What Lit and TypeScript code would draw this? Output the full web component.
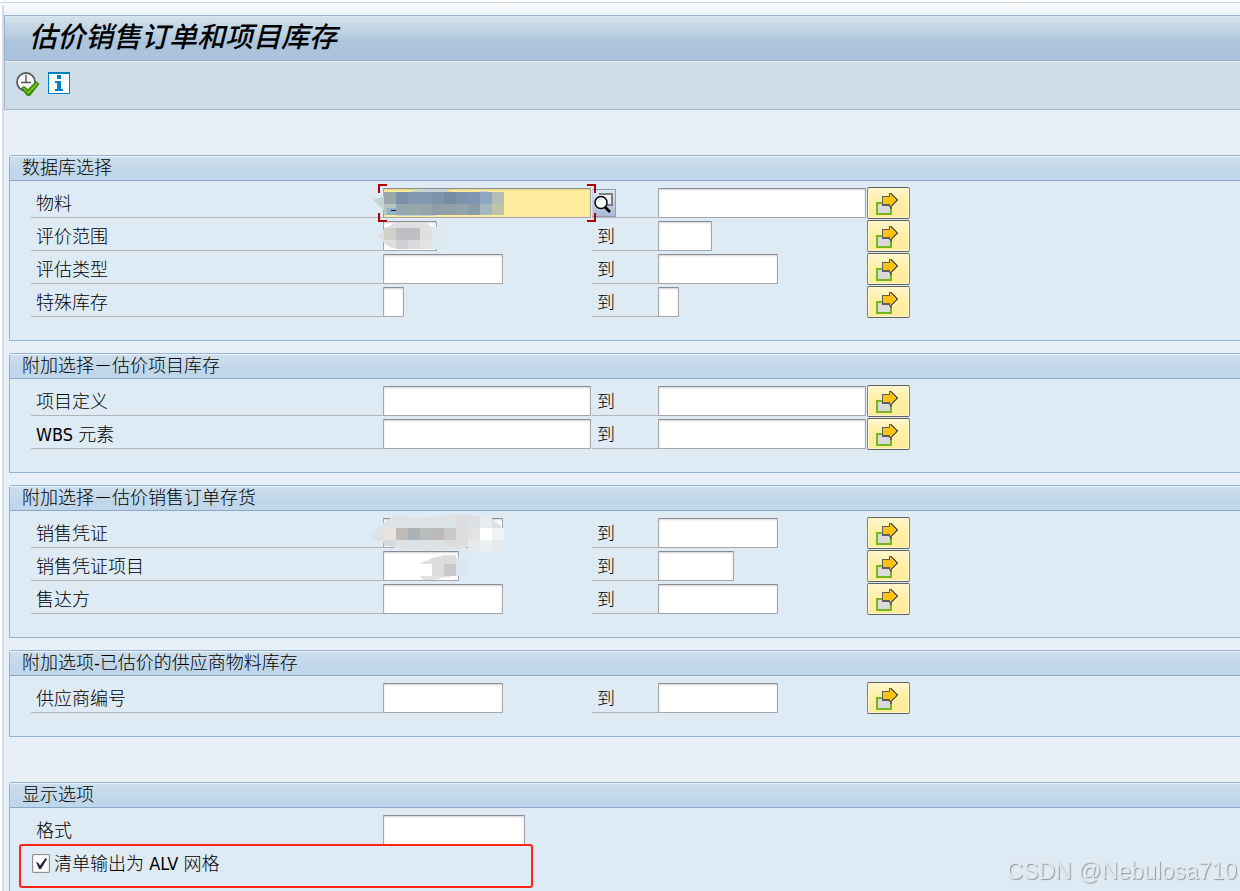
import { LitElement, html, css, svg, nothing } from "lit";
import { customElement, property } from "lit/decorators.js";

type Size = "long" | "plant" | "mid" | "one" | "short" | "format";
type Block = [number, number, number, number, string];

interface Redaction {
  shape: string;
  tint: string;
  blocks: Block[];
}

interface Row {
  id: string;
  label: string;
  size: Size;
  active?: boolean;
  redaction?: Redaction;
}

interface Group {
  title: string;
  rows: Row[];
}

/** Lays colours side by side as 12px mosaic blocks. */
const strip = (x: number, y: number, h: number, colors: string): Block[] =>
  colors.split(" ").map((c, i) => [x + i * 12, y, 12, h, "#" + c] as Block);

const materialMask: Redaction = {
  shape: "M-10 12 L1 8 V22 L-2 20 Z M26 4 Q34 1 48 1 H62 L68 4 Z M96 4 V3 H104 V4 Z M14 28 V26 H52 V28 Z",
  tint: "#c6d3d3",
  blocks: [
    ...strip(1, 4, 12, "9ba8aa 7b8fa9 8398b3 8398b3 7f93ab 778ba5 7f93ac 7f95b2 8ea6c1 b3bfb3"),
    ...strip(1, 16, 11, "b9c6c4 93a6b2 95a8ac 93a5aa 8d9ea6 909fa6 93a4a9 8b9ca9 a5b8c1 bfc4a9"),
    [4, 20, 9, 7, "#8fb4d0"],
    [8, 22, 5, 1, "#111111"],
  ],
};

const plantMask: Redaction = {
  shape: "M-6 15 L1 8 Q10 1 24 1 H40 Q46 3 48 6 H66 L60 8 V28 H14 Q4 26 1 22 Z",
  tint: "#dfdfe2",
  blocks: [
    ...strip(1, 7, 12, "d2d2cb c0bec2 c0bec2 dfe0e0 dee8f0"),
    ...strip(13, 19, 9, "d1d0d3 d9dcdf e2e3e3 dce8ef"),
    [52, 6, 9, 20, "#dee9f1"],
  ],
};

const documentMask: Redaction = {
  shape: "M-11 14 L1 5 L8 0 Q16 -6 27 0 L54 -1 Q70 -6 96 -2 L108 0 L118 8 L121 22 V34 H98 L86 29 Q60 34 28 32 L8 29 L-10 20 Z",
  tint: "#dce2e5",
  blocks: [
    ...strip(73, -2, 12, "dddcdf dde0e2 e6edf1"),
    ...strip(1, 10, 12, "e6e5e0 bfb9b7 a9b2b7 babdbc b9bab9 cac9c8 dddcde e3e3e3 ffffff f0f2f4"),
    ...strip(1, 22, 6, "d5dadd dee2e4 dce1e3 dce1e3 dce1e3 d8dcdf dcdddf"),
    ...strip(85, 22, 12, "e4e9ec ebf1f3 e4eaed"),
  ],
};

const itemMask: Redaction = {
  shape: "M36 13 L49 7 L61 4 H73 V25 L61 26 L52 29 H40 L36 25 L49 25 V13 Z",
  tint: "#dfe3e5",
  blocks: [
    [49, 7, 12, 18, "#dcdcda"],
    [61, 5, 12, 8, "#dcdcda"],
    [61, 13, 12, 12, "#c7c8cb"],
    [73, 7, 11, 18, "#dbe6ee"],
  ],
};

const groups: Group[] = [
  {
    title: "数据库选择",
    rows: [
      { id: "material", label: "物料", size: "long", active: true, redaction: materialMask },
      { id: "area", label: "评价范围", size: "plant", redaction: plantMask },
      { id: "type", label: "评估类型", size: "mid" },
      { id: "special", label: "特殊库存", size: "one" },
    ],
  },
  {
    title: "附加选择－估价项目库存",
    rows: [
      { id: "project", label: "项目定义", size: "long" },
      { id: "wbs", label: "WBS 元素", size: "long" },
    ],
  },
  {
    title: "附加选择－估价销售订单存货",
    rows: [
      { id: "document", label: "销售凭证", size: "mid", redaction: documentMask },
      { id: "item", label: "销售凭证项目", size: "short", redaction: itemMask },
      { id: "soldto", label: "售达方", size: "mid" },
    ],
  },
  {
    title: "附加选项-已估价的供应商物料库存",
    rows: [{ id: "vendor", label: "供应商编号", size: "mid" }],
  },
];

const controls = css`
  :host {
    display: block;
  }
  *,
  *::before {
    box-sizing: border-box;
  }
  .row {
    display: grid;
    grid-template-columns: 352px 209px 66px 209px 43px;
    height: 33px;
    align-items: start;
  }
  .label {
    height: 31px;
    line-height: 34px;
    padding-left: 5px;
    border-bottom: 1px solid #b3b5b8;
    white-space: nowrap;
  }
  .cell {
    position: relative;
    padding-top: 1px;
  }
  .field {
    display: block;
    height: 30px;
    margin: 0;
    padding: 0 4px;
    border: 1px solid #a6a7ac;
    border-top-color: #8c8d92;
    border-radius: 1px;
    background: #ffffff;
    box-shadow: inset 0 1px 2px #d3d3d8;
    font: inherit;
    outline: none;
  }
  .long { width: 208px; }
  .plant { width: 54px; }
  .mid { width: 120px; }
  .one { width: 21px; }
  .short { width: 76px; }
  .format { width: 142px; }
`;

@customElement("selection-row")
export class SelectionRow extends LitElement {
  @property({ attribute: false }) row!: Row;

  static styles = [
    controls,
    css`
      .active {
        background: #ffee9e;
        box-shadow: inset 0 1px 2px #e2cf86;
      }
      .mask {
        position: absolute;
        left: 0;
        top: 1px;
        width: 1px;
        height: 1px;
        overflow: visible;
        pointer-events: none;
      }
      .brackets {
        position: absolute;
        left: -5px;
        top: -3px;
        z-index: 1;
        pointer-events: none;
      }
      .to {
        height: 31px;
        line-height: 34px;
        padding-left: 5px;
        border-bottom: 1px solid #b3b5b8;
      }
      .to-search {
        padding: 2px 0 0;
      }
      .search {
        display: block;
        width: 24px;
        height: 28px;
        padding: 0;
        border: 1px solid #8f9bb0;
        border-left-color: #c3cede;
        background: linear-gradient(#dfe7f1, #a9b9d6);
      }
      .more {
        display: block;
        width: 43px;
        height: 32px;
        padding: 0;
        border: 1px solid #5f6064;
        border-left-color: #96834d;
        border-right-color: #96834d;
        border-radius: 2px;
        background: linear-gradient(#fff7cf, #ffefa4 45%, #fdeb9b);
        box-shadow: inset 0 0 0 1px #fff6c9;
      }
      .icon {
        display: block;
      }
    `,
  ];

  private mask(r: Redaction) {
    return html`<svg class="mask" aria-hidden="true" shape-rendering="crispEdges">
      <path d=${r.shape} fill=${r.tint}></path>
      ${r.blocks.map(([x, y, w, h, c]) => svg`<rect x=${x} y=${y} width=${w} height=${h} fill=${c}></rect>`)}
    </svg>`;
  }

  render() {
    const { id, label, size, active, redaction } = this.row;
    return html`<div class="row">
      <label class="label" for=${id}>${label}</label>
      <div class="cell">
        <input class="field ${size} ${active ? "active" : ""}" id=${id} type="text" />
        ${redaction ? this.mask(redaction) : nothing}
        ${active
          ? html`<svg class="brackets" width="218" height="38" fill="none" stroke="#ae0000" stroke-width="2" aria-hidden="true">
              <path d="M1 9V1H9M209 1H217V9M217 29V37H209M9 37H1V29"></path>
            </svg>`
          : nothing}
      </div>
      ${active
        ? html`<div class="to to-search">
            <button class="search" type="button" aria-label="搜索">
              <svg class="icon" width="22" height="26" viewBox="1 0 22 26" aria-hidden="true">
                <path d="M7 4H20V15H15" fill="#eef2f7" stroke="#7f7f82" stroke-width="2"></path>
                <circle cx="9" cy="12.500" r="6" fill="#ffffff" stroke="#000000" stroke-width="1.500"></circle>
                <path d="M5.500 12Q6.500 9 9.500 9" stroke="#c8d4e4" fill="none"></path>
                <path d="M13 17L18 22" stroke="#000000" stroke-width="2.800"></path>
              </svg>
            </button>
          </div>`
        : html`<label class="to" for="${id}-to">到</label>`}
      <div class="cell">
        <input class="field ${size}" id="${id}-to" type="text" aria-label="${label} 到" />
      </div>
      <button class="more" type="button" aria-label="多项选择 ${label}">
        <svg class="icon" width="41" height="30" viewBox="1 1 41 30" shape-rendering="crispEdges" aria-hidden="true">
          <path d="M10 16H24V27H10Z" fill="#dadada" stroke="#76b51b" stroke-width="2"></path>
          <path d="M15 9H22V6H25V7H26V8H27V9H28V10H29V11H30V12H31V14H30V15H29V16H28V17H27V18H26V19H25V22H23V20H22V19H15Z" fill="#5e5e60"></path>
          <path d="M16 10H23V7H24V8H25V9H26V10H27V11H28V12H29V14H28V15H27V16H26V17H25V18H24V19H23V17H16Z" fill="#ffc20e"></path>
        </svg>
      </button>
    </div>`;
  }
}

@customElement("app-root")
export class AppRoot extends LitElement {
  static styles = [
    controls,
    css`
      :host {
        height: 100vh;
        overflow: hidden;
        background: #ffffff;
        color: #000000;
        font: 18px/24px "DejaVu Sans Condensed", "Noto Sans CJK SC", sans-serif;
        font-weight: 300;
      }
      .window {
        margin-top: 2px;
        padding: 2px 0 0 2px;
        border-top: 1px solid #cbd5e3;
      }
      .frame {
        padding-top: 10px;
        border-left: 2px solid #d5dce8;
        background: linear-gradient(#f8fafc, #e8eff7 12px);
      }
      .title-bar {
        height: 46px;
        padding-left: 24px;
        border: 1px solid #9cb2ca;
        border-right: 0;
        background: linear-gradient(#d3e2ee, #b9cede 45%, #abc3db 60%, #acc3dc);
        box-shadow: inset 0 1px #dce8f1;
      }
      .title {
        margin: 0;
        font-size: 28px;
        line-height: 44px;
        font-style: italic;
        font-weight: 500;
        white-space: nowrap;
      }
      .toolbar {
        display: flex;
        gap: 8px;
        height: 49px;
        padding: 11px 0 0 11px;
        border: 1px solid #a3b8cd;
        border-width: 0 0 1px 1px;
        background: #cfdde7;
        box-shadow: inset 0 1px #e5eef4;
      }
      .tool {
        height: 24px;
        padding: 0;
        border: 0;
        background: none;
      }
      .icon {
        display: block;
      }
      .content {
        display: flex;
        flex-direction: column;
        gap: 12px;
        padding: 45px 0 0 5px;
      }
      .group {
        border: 1px solid #93b2d1;
        border-right: 0;
        border-radius: 3px 0 0 0;
        background: #deeaf4;
      }
      .group-title {
        height: 25px;
        margin: 0;
        padding-left: 12px;
        border-bottom: 1px solid #8aa6c8;
        background: linear-gradient(#cedfec, #c0d6ea 65%);
        box-shadow: inset 0 1px #e9f3f9;
        font-size: 18px;
        line-height: 24px;
        font-weight: 300;
        white-space: nowrap;
      }
      .rows {
        padding: 6px 0 21px 21px;
      }
      .options {
        margin-top: 33px;
      }
      .check-row {
        position: relative;
        display: flex;
        align-items: center;
        gap: 4px;
        height: 33px;
        padding-left: 1px;
      }
      .check-row::before {
        content: "";
        position: absolute;
        left: -12px;
        top: -3px;
        width: 514px;
        height: 44px;
        border: 2px solid #ff2416;
        border-radius: 3px;
        pointer-events: none;
      }
      .check {
        appearance: none;
        width: 18px;
        height: 19px;
        margin: 0;
        border: 1px solid #8f9096;
        border-radius: 1px;
        background: #ffffff;
        box-shadow: inset 0 0 2px #bbbbc2;
      }
      .check:checked {
        background: #ffffff
          url("data:image/svg+xml,%3Csvg xmlns='http://www.w3.org/2000/svg' viewBox='0 0 16 17'%3E%3Cpath d='M3 7L5.500 8L7 10.500L12.500 3L14 4L8 14H6Z' fill='%23252540'/%3E%3C/svg%3E")
          center / 16px 17px no-repeat;
      }
      .watermark {
        position: fixed;
        right: 3px;
        bottom: 7px;
        color: #e3e9ee;
        font: 23px/26px "Liberation Sans", sans-serif;
        text-shadow: 1px 1px 1px #8f989f;
        pointer-events: none;
      }
    `,
  ];

  render() {
    return html`<div class="window">
        <main class="frame">
          <header class="title-bar"><h1 class="title">估价销售订单和项目库存</h1></header>
          <div class="toolbar" role="toolbar">
            <button class="tool" type="button" aria-label="执行">
              <svg class="icon" width="24" height="24" viewBox="0 0 24 24" aria-hidden="true">
                <circle cx="10" cy="10" r="9" fill="#fafafa" stroke="#5c5c5e" stroke-width="1.800"></circle>
                <path d="M10 3V10.500M5 10.500H15" stroke="#555558" stroke-width="1.400" fill="none"></path>
                <path d="M5 16L8 14L12 17L20 9L23.500 12L14 24H11Z" fill="#3f8a12"></path>
                <path d="M7 16.500L8 15.500L12 19.500L20 11L21.500 12.500L12.500 22Z" fill="#76c21c"></path>
              </svg>
            </button>
            <button class="tool" type="button" aria-label="信息">
              <svg class="icon" width="22" height="24" viewBox="0 0 22 24" shape-rendering="crispEdges" aria-hidden="true">
                <path d="M0 0H22V22H0Z" fill="#0080c6"></path>
                <path d="M1 2H21V21H1Z" fill="#ffffff"></path>
                <path d="M9 3H13V7H9ZM7 9H13V17H15V19H7V17H9V11H7Z" fill="#0080c6"></path>
              </svg>
            </button>
          </div>
          <form class="content">
            ${groups.map(
              (g) => html`<section class="group">
                <h2 class="group-title">${g.title}</h2>
                <div class="rows">${g.rows.map((r) => html`<selection-row .row=${r}></selection-row>`)}</div>
              </section>`
            )}
            <section class="group options">
              <h2 class="group-title">显示选项</h2>
              <div class="rows">
                <div class="row">
                  <label class="label" for="layout">格式</label>
                  <div class="cell"><input class="field format" id="layout" type="text" /></div>
                </div>
                <div class="check-row">
                  <input class="check" id="alv" type="checkbox" checked />
                  <label for="alv">清单输出为 ALV 网格</label>
                </div>
              </div>
            </section>
          </form>
        </main>
      </div>
      <div class="watermark">CSDN @Nebulosa710</div>`;
  }
}
